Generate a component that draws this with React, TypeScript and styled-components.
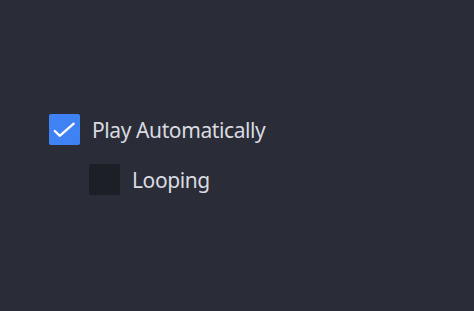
import React, { useState } from "react";
import styled, { createGlobalStyle } from "styled-components";

const GlobalStyle = createGlobalStyle`
  html, body {
    margin: 0;
    padding: 0;
    background: #2a2d37;
  }
  body {
    font-family: "Noto Sans", "Open Sans", sans-serif;
  }
`;

const Page = styled.div`
  width: 474px;
  height: 311px;
  box-sizing: border-box;
  padding: 114px 0 0 49px;
  display: flex;
  flex-direction: column;
  gap: 19px;
`;

const Option = styled.label<{ indent?: number }>`
  display: flex;
  align-items: center;
  gap: 12px;
  margin-left: ${(p) => p.indent || 0}px;
  cursor: pointer;
  user-select: none;
`;

const Box = styled.span<{ checked: boolean }>`
  width: 31px;
  height: 31px;
  flex: none;
  border-radius: 2px;
  background: ${(p) => (p.checked ? "#3f82f3" : "#1c1f26")};
  display: flex;
  align-items: center;
  justify-content: center;
`;

const Label = styled.span`
  color: #d9dbe1;
  font-size: 21px;
  letter-spacing: -0.4px;
  line-height: 29px;
  padding-top: 2px;
`;

function Check() {
  return (
    <svg width="31" height="31" viewBox="0 0 32 32" fill="none">
      <path
        d="M6 17.5l5 5 14.5-12.5"
        stroke="#ffffff"
        strokeWidth="2.4"
        strokeLinecap="round"
        strokeLinejoin="round"
      />
    </svg>
  );
}

function Checkbox(props: { label: string; defaultChecked?: boolean; indent?: number }) {
  const [checked, setChecked] = useState(!!props.defaultChecked);
  return (
    <Option indent={props.indent} onClick={() => setChecked(!checked)}>
      <Box checked={checked}>{checked && <Check />}</Box>
      <Label>{props.label}</Label>
    </Option>
  );
}

export default function App() {
  return (
    <>
      <GlobalStyle />
      <Page>
        <Checkbox label="Play Automatically" defaultChecked />
        <Checkbox label="Looping" indent={40} />
      </Page>
    </>
  );
}
